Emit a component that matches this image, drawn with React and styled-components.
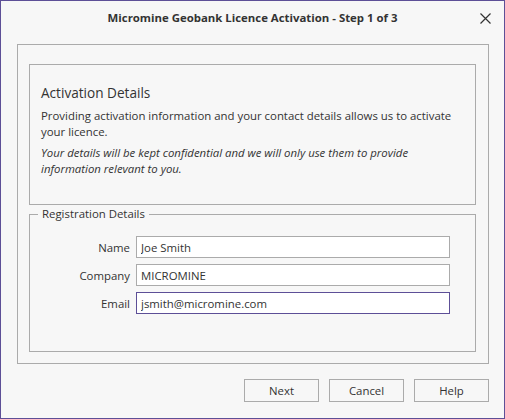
import React from 'react';
import styled, { createGlobalStyle } from 'styled-components';

const GlobalStyle = createGlobalStyle`
  html, body {
    margin: 0;
    padding: 0;
    background: #ffffff;
  }
  * {
    box-sizing: border-box;
  }
`;

const FONT = `"Segoe UI", "Open Sans", "Noto Sans", sans-serif`;

// Dialog frame
const Window = styled.div`
  width: 505px;
  height: 419px;
  border: 1px solid #5d4f97;
  background: #f7f7f7;
  color: #333333;
  font-family: ${FONT};
  font-size: 11.4px;
  display: flex;
  flex-direction: column;
`;

const TitleBar = styled.div`
  height: 32px;
  display: flex;
  align-items: center;
  justify-content: center;
  position: relative;
`;

const Title = styled.div`
  font-weight: 700;
  font-size: 11.4px;
  color: #333333;
`;

const CloseButton = styled.button`
  position: absolute;
  right: 13px;
  top: 11px;
  width: 12px;
  height: 12px;
  padding: 0;
  border: none;
  background: transparent;
  display: flex;
  align-items: center;
  justify-content: center;
  cursor: pointer;
`;

const Body = styled.div`
  flex: 1;
  display: flex;
  flex-direction: column;
  padding: 11px 15px 0 16px;
`;

const Panel = styled.div`
  height: 320px;
  border: 1px solid #ababab;
  padding: 19px 12px 11px 11px;
  display: flex;
  flex-direction: column;
  gap: 1px;
`;

const InfoBox = styled.div`
  height: 141px;
  border: 1px solid #ababab;
  padding: 18px 11px 0 11px;
`;

const Heading = styled.h2`
  margin: 0 0 5px;
  font-size: 13.6px;
  font-weight: 400;
  line-height: 20px;
  color: #333333;
`;

const Text = styled.p`
  margin: 0 0 5px;
  line-height: 16px;
  font-style: ${({ italic }) => (italic ? 'italic' : 'normal')};
`;

const Group = styled.fieldset`
  flex: 1;
  margin: 0;
  border: 1px solid #ababab;
  padding: 14px 0 0 0;
  display: flex;
  flex-direction: column;
  gap: 6px;
`;

const Legend = styled.legend`
  margin-left: 8px;
  padding: 0 4px;
  line-height: 16px;
  font-size: 11.4px;
  color: #333333;
`;

const Row = styled.div`
  display: grid;
  grid-template-columns: 100px 314px;
  column-gap: 6px;
  align-items: center;
`;

const Label = styled.label`
  text-align: right;
`;

const Input = styled.input`
  height: 22px;
  width: 314px;
  border: 1px solid ${({ focused }) => (focused ? '#5d4f97' : '#ababab')};
  background: #ffffff;
  padding: 0 4px;
  font-family: ${FONT};
  font-size: 11.4px;
  color: #333333;
  outline: none;
`;

const Footer = styled.div`
  display: flex;
  justify-content: flex-end;
  gap: 10px;
  padding-top: 15px;
`;

const Button = styled.button`
  width: 75px;
  height: 23px;
  border: 1px solid #ababab;
  background: #f7f7f7;
  font-family: ${FONT};
  font-size: 11.4px;
  color: #333333;
  padding: 0;
  cursor: pointer;
`;

const fields = [
  { label: 'Name', value: 'Joe Smith' },
  { label: 'Company', value: 'MICROMINE' },
  { label: 'Email', value: 'jsmith@micromine.com', focused: true },
];

const App = () => {
  return (
    <>
      <GlobalStyle />
      <Window>
        <TitleBar>
          <Title>Micromine Geobank Licence Activation - Step 1 of 3</Title>
          <CloseButton aria-label="Close">
            <svg width="11" height="11" viewBox="0 0 11 11">
              <path d="M0.5 0.5 L10.5 10.5 M10.5 0.5 L0.5 10.5" stroke="#333" strokeWidth="1.2" />
            </svg>
          </CloseButton>
        </TitleBar>

        <Body>
          <Panel>
            <InfoBox>
              <Heading>Activation Details</Heading>
              <Text>
                Providing activation information and your contact details allows us to activate
                your licence.
              </Text>
              <Text italic>
                Your details will be kept confidential and we will only use them to provide
                information relevant to you.
              </Text>
            </InfoBox>

            <Group>
              <Legend>Registration Details</Legend>
              {fields.map((f) => (
                <Row key={f.label}>
                  <Label>{f.label}</Label>
                  <Input defaultValue={f.value} focused={f.focused} />
                </Row>
              ))}
            </Group>
          </Panel>

          <Footer>
            <Button>Next</Button>
            <Button>Cancel</Button>
            <Button>Help</Button>
          </Footer>
        </Body>
      </Window>
    </>
  );
};

export default App;
